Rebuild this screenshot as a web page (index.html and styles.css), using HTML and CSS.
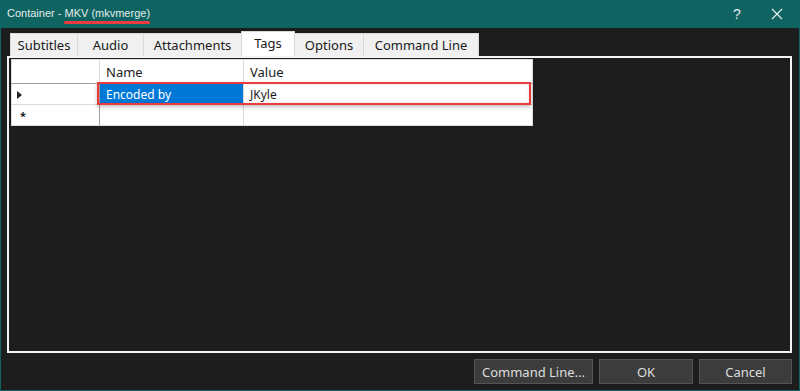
FILE: index.html
```html
<!DOCTYPE html>
<html lang="en">
<head>
    <meta charset="UTF-8">
    <title>Container - MKV (mkvmerge)</title>
    <link rel="stylesheet" href="styles.css">
</head>
<body>
    <div class="window">
        <!-- Title Bar -->
        <div class="titlebar">
            <div class="title">Container - <span class="mark">MKV (mkvmerge)</span></div>
            <div class="title-buttons">
                <span class="help">?</span>
                <svg class="close" width="12" height="12" viewBox="0 0 12 12">
                    <path d="M1 1 L11 11 M11 1 L1 11" stroke="#e6eeee" stroke-width="1.2" fill="none"/>
                </svg>
            </div>
        </div>

        <div class="content">
            <!-- Tabs -->
            <div class="tabs">
                <div class="tab tab-subtitles">Subtitles</div>
                <div class="tab tab-audio">Audio</div>
                <div class="tab tab-attachments">Attachments</div>
                <div class="tab tab-tags active">Tags</div>
                <div class="tab tab-options">Options</div>
                <div class="tab tab-cmd">Command Line</div>
            </div>

            <!-- Tab Panel -->
            <div class="panel">
                <table class="grid">
                    <colgroup>
                        <col class="col-head">
                        <col class="col-name">
                        <col class="col-value">
                    </colgroup>
                    <tr class="header-row">
                        <td></td>
                        <td>Name</td>
                        <td>Value</td>
                    </tr>
                    <tr class="data-row">
                        <td class="row-head"><span class="arrow"></span></td>
                        <td class="selected">Encoded by</td>
                        <td>JKyle</td>
                    </tr>
                    <tr class="new-row">
                        <td class="row-head"><span class="star">*</span></td>
                        <td></td>
                        <td></td>
                    </tr>
                </table>
                <div class="highlight"></div>
            </div>

            <!-- Buttons -->
            <div class="buttons">
                <button class="btn wide">Command Line...</button>
                <button class="btn">OK</button>
                <button class="btn narrow">Cancel</button>
            </div>
        </div>
    </div>
</body>
</html>
```

FILE: styles.css
```css
:root {
    --teal: #0f6361;
    --dark: #1d1d1d;
    --grid-line: #a0a0a0;
}

body {
    margin: 0;
    font-family: "Noto Sans", "Open Sans", sans-serif;
    background: var(--dark);
}

.window {
    width: 800px;
    height: 391px;
    box-sizing: border-box;
    border: 1px solid var(--teal);
    border-top: none;
    background: var(--dark);
    display: flex;
    flex-direction: column;
}

.titlebar {
    height: 28px;
    margin: 0 -1px;
    background: var(--teal);
    display: flex;
    align-items: center;
    justify-content: space-between;
    padding: 0 0 0 7px;
    color: #e3ecec;
    font-family: "Liberation Sans", Arial, sans-serif;
    font-size: 11px;
}

.title {
    padding-bottom: 2px;
}

.mark {
    position: relative;
}

.mark::after {
    content: "";
    position: absolute;
    left: 0;
    right: 0;
    bottom: -5px;
    height: 3px;
    border-radius: 2px;
    background: #ec3b3f;
}

.title-buttons {
    display: flex;
    align-items: center;
}

.help {
    width: 46px;
    text-align: center;
    font-size: 14px;
}

.close {
    margin: 0 17px 0 11px;
}

.content {
    flex: 1;
    display: flex;
    flex-direction: column;
    padding: 0 7px 0 6px;
}

.tabs {
    display: flex;
    padding-left: 3px;
    margin-top: 3px;
    align-items: flex-end;
    height: 25px;
}

.tab {
    height: 23px;
    box-sizing: border-box;
    background: #f0f0f0;
    border: 1px solid #d9d9d9;
    border-bottom: none;
    margin-right: -1px;
    text-align: center;
    font-size: 13px;
    line-height: 22px;
    color: #1a1a1a;
}

.tab-subtitles { width: 68px; }
.tab-audio { width: 67px; }
.tab-attachments { width: 99px; }
.tab-tags { width: 54px; }
.tab-options { width: 70px; }
.tab-cmd { width: 116px; }

.tab.active {
    height: 25px;
    background: #ffffff;
    line-height: 23px;
}

.panel {
    position: relative;
    height: 297px;
    box-sizing: border-box;
    border: 2px solid #f4f4f4;
    padding: 1px 2px;
}

.grid {
    border-collapse: collapse;
    width: 521px;
    background: #ffffff;
    font-size: 12px;
    color: #1a1a1a;
    table-layout: fixed;
}

.col-head { width: 88px; }
.col-name { width: 144px; }
.col-value { width: 289px; }

.grid td {
    border: 1px solid #dcdcdc;
    padding: 0 6px;
    height: 20px;
    white-space: nowrap;
}

.header-row td {
    height: 23px;
    border-bottom: 1px solid var(--grid-line);
    font-size: 13px;
}

.row-head {
    border-right: 1px solid var(--grid-line) !important;
}

.grid .selected {
    background: #0078d7;
    color: #ffffff;
}

.arrow {
    display: inline-block;
    width: 0;
    height: 0;
    border-top: 4px solid transparent;
    border-bottom: 4px solid transparent;
    border-left: 5px solid #222;
    margin-left: -1px;
}

.star {
    font-size: 11px;
    font-weight: bold;
    margin-left: 2px;
}

.highlight {
    position: absolute;
    left: 88px;
    top: 24px;
    width: 430px;
    height: 19px;
    border: 2px solid #ec3b3f;
    box-shadow: 0 2px 4px rgba(0, 0, 0, 0.25), inset 0 0 3px rgba(0, 0, 0, 0.15);
}

.buttons {
    display: flex;
    justify-content: flex-end;
    gap: 6px;
    margin-top: 6px;
}

.btn {
    width: 94px;
    height: 25px;
    background: #3c3c3c;
    border: 1px solid #555555;
    color: #dedede;
    font-family: "Noto Sans", "Open Sans", sans-serif;
    font-size: 13px;
    padding: 0;
}

.btn.wide {
    width: 119px;
}

.btn.narrow {
    width: 93px;
}
```
